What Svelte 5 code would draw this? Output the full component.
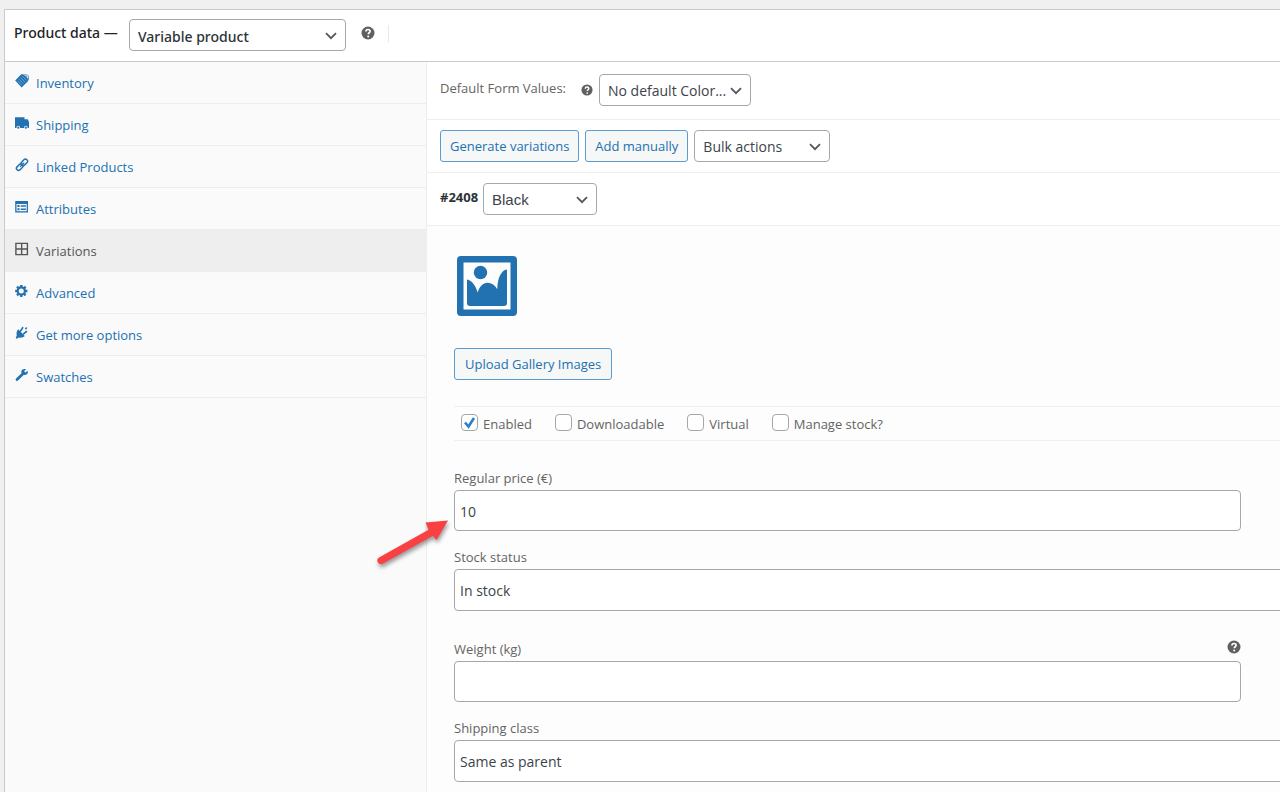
<script>
  const tabs = [
    { name: 'Inventory', icon: 'tag' },
    { name: 'Shipping', icon: 'truck' },
    { name: 'Linked Products', icon: 'link' },
    { name: 'Attributes', icon: 'list' },
    { name: 'Variations', icon: 'grid' },
    { name: 'Advanced', icon: 'gear' },
    { name: 'Get more options', icon: 'plug' },
    { name: 'Swatches', icon: 'wrench' },
  ];
  let current = $state('Variations');
  let options = $state([
    { name: 'Enabled', on: true },
    { name: 'Downloadable', on: false },
    { name: 'Virtual', on: false },
    { name: 'Manage stock?', on: false },
  ]);
  let price = $state('10');
  let weight = $state('');
</script>

{#snippet help(label)}
  <svg class="help" viewBox="0 0 14 14" role="img" aria-label={label}>
    <circle cx="7" cy="7" r="6.5" fill="#606060" />
    <path d="M4.9 5.5C5 4.1 5.9 3.5 7 3.5s2.1.7 2.1 1.8c0 1.4-1.8 1.5-1.8 3" fill="none" stroke="#fff" stroke-width="1.7" />
    <circle cx="7.2" cy="10.5" r="1" fill="#fff" />
  </svg>
{/snippet}

{#snippet glyph(icon)}
  <svg class="glyph" viewBox="0 0 14 14" aria-hidden="true">
    {#if icon === 'tag'}
      <path d="M.2 6.500 6.200.3h2L13.200 5v2L6.600 13.400z" fill="currentColor" />
      <path d="m2.400 6.600 4.400 4.700M4 5l4.400 4.700M5.600 3.400 10 8.100M7.200 1.800l4.400 4.700" stroke="#8db8da" stroke-width=".7" />
      <path d="M8.800.9h3.600l1.100 1.200v3.800" stroke="currentColor" fill="none" stroke-width=".7" />
      <path d="M9.800 2.300h1.900v1.900" stroke="currentColor" fill="none" stroke-width=".7" />
    {:else if icon === 'truck'}
      <path d="M0 1.200h9.500v2h3.200l1.300 2.800v6H0z" fill="currentColor" />
      <circle cx="3.300" cy="11.600" r="1.800" fill="#fafafa" />
      <circle cx="10.800" cy="11.600" r="1.800" fill="#fafafa" />
      <circle cx="3.300" cy="11.700" r="1.100" fill="currentColor" />
      <circle cx="10.800" cy="11.700" r="1.100" fill="currentColor" />
    {:else if icon === 'link'}
      <g fill="none" stroke="currentColor" stroke-width="1.500">
        <rect x="5.600" y="2.300" width="7.400" height="4.200" rx="2.100" transform="rotate(-45 9.300 4.400)" />
        <rect x="1" y="7.100" width="7.400" height="4.200" rx="2.100" transform="rotate(-45 4.700 9.200)" />
        <path d="m5 8.900 4.200-4.200" stroke-width="1.300" />
      </g>
    {:else if icon === 'list'}
      <path d="M.200 1H13v11.500H.200z" fill="currentColor" />
      <path d="M1.500 4h10.200v7.200H1.500z" fill="#fafafa" />
      <path d="M2.400 5h2.200v2H2.400zM2.400 8.300h2.200v2H2.400zM5.700 5.200h5.200v1.500H5.700zM5.700 8.500h5.200V10H5.700z" fill="currentColor" />
    {:else if icon === 'grid'}
      <path d="M.900 1.400h11.500v11.200H.900zM6.650 1.400v11.200M.900 7h11.500" fill="none" stroke="currentColor" stroke-width="1.400" />
    {:else if icon === 'gear'}
      <circle cx="6.300" cy="7" r="3.600" fill="none" stroke="currentColor" stroke-width="2.200" />
      <path transform="translate(-.7 0)" d="M7 .9v2M7 11.100v2M.9 7h2M11.100 7h2M2.700 2.700l1.400 1.400M9.900 9.900l1.400 1.400M2.700 11.300l1.400-1.400M9.900 4.100l1.400-1.400" stroke="currentColor" stroke-width="2.400" />
    {:else if icon === 'plug'}
      <path d="M3.200 3.200 9.800 10c-1.300 1.400-4 2-6.100 1.500l-1.400 1H.9v-1.400l.9-1.200c-.6-2.400-.2-5.100 1.400-6.700z" fill="currentColor" />
      <path d="m5.600 5 2.100-3.400M8.500 7.800l3-2.300M10.800 2.600l.6-.6" stroke="currentColor" stroke-width="1.600" stroke-linecap="round" />
    {:else}
      <path d="M2 11.500 8.500 5.300" stroke="currentColor" stroke-width="2.700" stroke-linecap="round" />
      <path d="M11 1.300 9.100 3.200l1.400 1.400 2.200-1.900c.4 1.500.1 2.800-.8 3.500-1 .8-2.600.9-3.900.3L6.500 4.900c-.5-1.300 0-2.500 1-3.300 1-.7 2.200-.8 3.500-.3z" fill="currentColor" />
    {/if}
  </svg>
{/snippet}

<main class="box">
  <header>
    <label class="title" for="type">Product data —</label>
    <select id="type" class="type"><option>Variable product</option></select>
    {@render help('Product type help')}
    <span class="divider"></span>
  </header>

  <div class="body">
    <nav>
      {#each tabs as tab}
        <a href="#{tab.icon}" class:active={current === tab.name} onclick={() => (current = tab.name)}>
          {@render glyph(tab.icon)}
          <span>{tab.name}</span>
        </a>
      {/each}
    </nav>

    <section class="panel">
      <div class="bar defaults">
        <label for="default">Default Form Values:</label>
        {@render help('Default values help')}
        <select id="default" class="default"><option>No default Color...</option></select>
      </div>
      <div class="bar actions">
        <button>Generate variations</button>
        <button>Add manually</button>
        <select class="bulk" aria-label="Bulk actions"><option>Bulk actions</option></select>
      </div>
      <div class="bar variation">
        <label for="colour">#2408</label>
        <select id="colour" class="colour"><option>Black</option></select>
      </div>

      <div class="detail">
        <button class="picture" aria-label="Upload an image">
          <svg viewBox="0 0 60 60" aria-hidden="true">
            <path fill="#2271b1" fill-rule="evenodd" d="M4 0h52a4 4 0 0 1 4 4v52a4 4 0 0 1-4 4H4a4 4 0 0 1-4-4V4a4 4 0 0 1 4-4zM6.500 6.500v47h47v-47z" />
            <circle cx="23.500" cy="16.500" r="6.700" fill="#2271b1" />
            <path fill="#2271b1" d="M10 23.500c5 1 9 6.500 10.500 13 2-6 5.500-9.800 10-9.800 4.200 0 7.500 2.300 9.800 6.500.3-11 3.700-19 9.700-19.700V47a3 3 0 0 1-3 3H13a3 3 0 0 1-3-3z" />
          </svg>
        </button>
        <button class="upload">Upload Gallery Images</button>

        <div class="options">
          {#each options as option}
            <label><input type="checkbox" bind:checked={option.on} /><span>{option.name}</span></label>
          {/each}
        </div>

        <div class="field">
          <label for="price">Regular price (€)</label>
          <input id="price" type="text" bind:value={price} />
          <svg class="arrow" viewBox="0 0 80 56" aria-hidden="true">
            <path d="M4 45.500 53.500 17.800 50.500 10.500 73 8.500 61.500 28 58 23.800 8 51.500a3.500 3.500 0 0 1-4-6z" fill="#f94144" />
          </svg>
        </div>
        <div class="field wide">
          <label for="stock">Stock status</label>
          <select id="stock"><option>In stock</option></select>
        </div>
        <div class="field weight">
          <div class="line">
            <label for="weight">Weight (kg)</label>
            {@render help('Weight help')}
          </div>
          <input id="weight" type="text" bind:value={weight} />
        </div>
        <div class="field wide">
          <label for="class">Shipping class</label>
          <select id="class"><option>Same as parent</option></select>
        </div>
      </div>
    </section>
  </div>
</main>

<style>
  :global(body) {
    background: #f0f0f1;
    overflow: hidden;
    font-family: "Open Sans", "Noto Sans", sans-serif;
    font-size: 13px;
    color: #646464;
  }
  .box, .box * { box-sizing: border-box; }
  .box {
    margin: 9px 0 0 4px;
    border: 1px solid #c9cacc;
    border-width: 1px 0 0 1px;
    background: #fff;
  }
  select, input, button { font: inherit; margin: 0; }
  select {
    appearance: none;
    height: 32px;
    padding: 1px 20px 0 8px;
    border: 1px solid #a5a7aa;
    border-radius: 4px;
    color: #3c434a;
    font-size: 14px;
    background: #fff url("data:image/svg+xml,%3Csvg xmlns='http://www.w3.org/2000/svg' viewBox='0 0 12 8'%3E%3Cpath d='m1 1.200 5 5 5-5' fill='none' stroke='%2350575e' stroke-width='1.800'/%3E%3C/svg%3E") no-repeat right 8px top 12px / 12px 8px;
  }
  .help { width: 14px; height: 14px; flex: none; display: block; }
  header {
    display: flex;
    align-items: flex-start;
    height: 52px;
    padding: 9px 9px 0;
    border-bottom: 1px solid #c9cacc;
  }
  .title {
    width: 115px;
    line-height: 28px;
    font-family: "Noto Sans", sans-serif;
    font-size: 14px;
    font-weight: 500;
    color: #1d2327;
    white-space: nowrap;
  }
  .type {
    width: 217px;
    padding-top: 2px;
    font-family: "Noto Sans", sans-serif;
    font-weight: 500;
    color: #2c3338;
  }
  header .help { margin: 7px 13px 0 15px; }
  .divider { width: 1px; height: 17px; margin-top: 6px; background: #e8e8e8; }
  .body { display: flex; }
  nav {
    flex: 0 0 33.100%;
    background: #fafafa;
    border-right: 1px solid #eee;
  }
  nav a {
    display: flex;
    gap: 7px;
    height: 42px;
    padding: 12px 10px 0;
    border-bottom: 1px solid #eee;
    color: #2271b1;
    text-decoration: none;
    line-height: 19px;
  }
  nav a.active { background: #eee; color: #555; }
  .glyph { width: 14px; height: 14px; flex: none; }
  .panel { flex: 1; min-width: 0; }
  .bar {
    display: flex;
    align-items: flex-start;
    height: 53px;
    padding: 10px 13px;
    border-bottom: 1px solid #eee;
  }
  .defaults { height: 58px; padding-top: 12px; }
  .defaults label { width: 141px; line-height: 28px; font-weight: 500; }
  .defaults .help { width: 12px; margin: 9px 6px 0 0; }
  .default { width: 152px; }
  .actions { gap: 6px; }
  .actions button { padding: 0 9px; }
  .bulk { width: 136px; }
  .variation label { width: 43px; line-height: 28px; font-weight: 700; color: #2c3338; }
  .colour { width: 114px; padding-top: 0; font-family: "Liberation Sans", sans-serif; font-size: 15px; }
  button {
    height: 32px;
    padding: 0 10px;
    border: 1px solid #5b9bd0;
    border-radius: 3px;
    background: #f6f7f7;
    color: #2271b1;
    white-space: nowrap;
  }
  .detail { padding: 30px 39px 0 27px; background: #fdfdfd; }
  .picture {
    display: block;
    width: 60px;
    height: 60px;
    margin: 0 3px 32px;
    padding: 0;
    border: 0;
    background: none;
  }
  .picture svg { display: block; width: 60px; height: 60px; }
  .upload { display: block; }
  .options {
    display: flex;
    gap: 23px;
    height: 35px;
    margin: 26px -39px 26px 0;
    padding: 7px;
    border: 1px solid #f0f0f0;
    border-width: 1px 0;
  }
  .options label { display: flex; gap: 5px; line-height: 21px; }
  .options input {
    appearance: none;
    width: 17px;
    height: 17px;
    border: 1px solid #a5a7aa;
    border-radius: 4px;
    background: #fff;
  }
  .options input:checked {
    background: #fff url("data:image/svg+xml,%3Csvg xmlns='http://www.w3.org/2000/svg' viewBox='0 0 15 15'%3E%3Cpath d='m3 7.500 3.500 4L12 3' fill='none' stroke='%232b7fcb' stroke-width='2.600'/%3E%3C/svg%3E") center / 15px 15px;
  }
  .field { position: relative; padding-bottom: 15px; }
  .field:last-child { padding-bottom: 10px; }
  .field label { display: block; line-height: 23px; }
  .field input, .field select {
    display: block;
    width: 100%;
    height: 41px;
    padding: 2px 5px 0;
    border: 1px solid #a5a7aa;
    border-radius: 4px;
    background-color: #fff;
    color: #3c434a;
    font-size: 14px;
  }
  .field select { height: 42px; padding-top: 0; }
  .wide { margin-right: -60px; }
  .wide select { background-image: none; }
  .weight { padding-top: 12px; }
  .line { display: flex; justify-content: space-between; }
  .line .help { margin-top: 2px; }
  .arrow {
    position: absolute;
    left: -79px;
    top: 45px;
    width: 80px;
    height: 56px;
    filter: drop-shadow(1px 3px 2px #0006);
  }
</style>
